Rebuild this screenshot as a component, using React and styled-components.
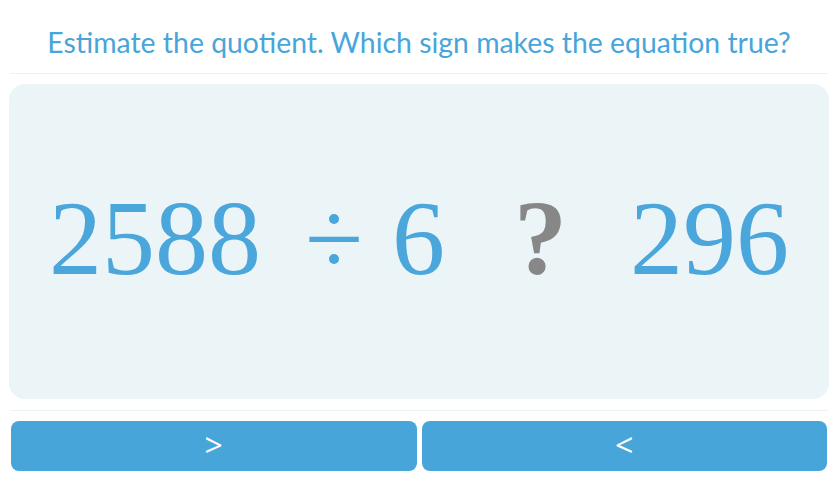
import React from 'react';
import styled, { createGlobalStyle } from 'styled-components';

const GlobalStyle = createGlobalStyle`
  html, body {
    margin: 0;
    padding: 0;
    background: #ffffff;
  }
`;

const StPage = styled.div`
  width: 840px;
  height: 501px;
  box-sizing: border-box;
  padding: 0 11px 0 9px;
  display: flex;
  flex-direction: column;
`;

const StTitle = styled.div`
  height: 74px;
  display: flex;
  align-items: center;
  justify-content: center;
  padding-top: 10px;
  box-sizing: border-box;
  font-family: Lato, 'Liberation Sans', sans-serif;
  font-size: 28.4px;
  color: #48a5da;
  border-bottom: 1px solid #e9f2f5;
  margin: 0 1px;
  white-space: nowrap;
`;

const StBoard = styled.div`
  margin-top: 10px;
  height: 315px;
  border-radius: 16px;
  background-color: #ebf4f7;
  display: flex;
  align-items: center;
  padding: 0 0 6px 40px;
  box-sizing: border-box;
  font-family: 'Liberation Serif', 'Times New Roman', serif;
  font-size: 106px;
  color: #4aa6db;
  white-space: nowrap;
`;

const StTerm = styled.span`
  display: inline-block;
  margin-left: ${p => p.gap || 0}px;
  color: ${p => (p.muted ? '#878787' : 'inherit')};
  font-weight: ${p => (p.muted ? 'bold' : 'normal')};
`;

const StOperator = styled.span`
  display: inline-block;
  width: 58px;
  margin-left: ${p => p.gap || 0}px;
  text-align: center;
`;

const StDivider = styled.div`
  margin: 11px 1px 0;
  border-top: 1px solid #e9f2f5;
`;

const StButtons = styled.div`
  margin: 10px 2px 0;
  display: grid;
  grid-template-columns: 1fr 1fr;
  gap: 5px;
`;

const StButton = styled.button`
  height: 50px;
  border: none;
  border-radius: 8px;
  background-color: #48a5da;
  color: #ffffff;
  font-family: 'Open Sans', 'Liberation Sans', sans-serif;
  font-size: 32px;
  line-height: 1;
  padding: 0 0 2px;
  cursor: pointer;
`;

const App = () => {
  return (
    <>
      <GlobalStyle />
      <StPage>
        <StTitle>Estimate the quotient. Which sign makes the equation true?</StTitle>
        <StBoard>
          <StTerm>2588</StTerm>
          <StOperator gap={44}>÷</StOperator>
          <StTerm gap={29}>6</StTerm>
          <StTerm gap={69} muted>?</StTerm>
          <StTerm gap={63}>296</StTerm>
        </StBoard>
        <StDivider />
        <StButtons>
          <StButton>&gt;</StButton>
          <StButton>&lt;</StButton>
        </StButtons>
      </StPage>
    </>
  );
};

export default App;
